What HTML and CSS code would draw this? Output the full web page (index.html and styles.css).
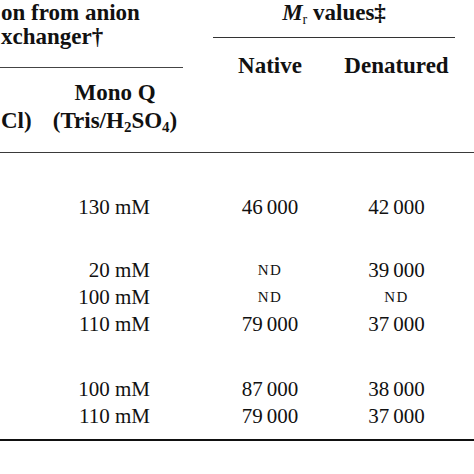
FILE: index.html
```html
<!DOCTYPE html>
<html>
<head>
<meta charset="utf-8">
<link rel="stylesheet" href="styles.css">
</head>
<body>
<div class="table">
  <div class="head">
    <div class="head-left">
      <div class="grp-title">
        <div class="t1">on from anion</div>
        <div class="t2">xchanger†</div>
      </div>
      <div class="sub">
        <div class="sub-cut">Cl)</div>
        <div class="sub-mono">
          <div>Mono Q</div>
          <div>(Tris/H<sub>2</sub>SO<sub>4</sub>)</div>
        </div>
      </div>
    </div>
    <div class="head-right">
      <div class="mr"><i>M</i><sub class="r">r</sub> values‡</div>
      <div class="cols">
        <div class="c-nat">Native</div>
        <div class="c-den">Denatured</div>
      </div>
    </div>
  </div>
  <div class="rows">
    <div class="group">
      <div class="row"><span class="mono">130 mM</span><span></span><span>46&#8201;000</span><span>42&#8201;000</span></div>
    </div>
    <div class="group g2">
      <div class="row"><span class="mono">20 mM</span><span></span><span class="nd">ND</span><span>39&#8201;000</span></div>
      <div class="row"><span class="mono">100 mM</span><span></span><span class="nd">ND</span><span class="nd">ND</span></div>
      <div class="row"><span class="mono">110 mM</span><span></span><span>79&#8201;000</span><span>37&#8201;000</span></div>
    </div>
    <div class="group g3">
      <div class="row"><span class="mono">100 mM</span><span></span><span>87&#8201;000</span><span>38&#8201;000</span></div>
      <div class="row"><span class="mono">110 mM</span><span></span><span>79&#8201;000</span><span>37&#8201;000</span></div>
    </div>
  </div>
</div>
</body>
</html>
```
FILE: styles.css
```css
html, body {
  margin: 0;
  padding: 0;
  background: #fff;
}
body {
  width: 474px;
  height: 474px;
  overflow: hidden;
  font-family: "Liberation Serif", "Times New Roman", serif;
  color: #111;
}
.table {
  width: 474px;
}
.head {
  display: flex;
  border-bottom: 1px solid #3a3a3a;
  font-weight: bold;
  font-size: 23px;
  line-height: 27px;
}
.head sub {
  font-size: 15px;
  line-height: 0;
  vertical-align: -4px;
}
.head-left {
  width: 213px;
  flex-shrink: 0;
}
.grp-title {
  width: 183px;
  border-bottom: 1px solid #444;
  padding-bottom: 19px;
  white-space: nowrap;
}
.t1 {
  padding-left: 1px;
  line-height: 26px;
}
.t2 {
  padding-left: 1px;
  line-height: 22px;
}
.sub {
  display: flex;
  margin-top: 11px;
  line-height: 28px;
  padding-bottom: 17px;
  white-space: nowrap;
}
.sub-cut {
  width: 40px;
  padding-left: 1px;
  box-sizing: border-box;
  align-self: flex-end;
  flex-shrink: 0;
}
.sub-mono {
  width: 150px;
  text-align: center;
  flex-shrink: 0;
}
.head-right {
  width: 242px;
  flex-shrink: 0;
}
.mr {
  text-align: center;
  line-height: 26px;
  border-bottom: 1px solid #333;
  padding-bottom: 11px;
}
.mr sub.r {
  font-weight: normal;
  font-size: 14px;
}
.cols {
  display: flex;
  margin-top: 14px;
}
.c-nat {
  width: 114px;
  flex-shrink: 0;
  text-align: center;
}
.c-den {
  width: 139px;
  flex-shrink: 0;
  text-align: center;
}
.rows {
  font-size: 21px;
  line-height: 27px;
  padding-top: 41px;
  padding-bottom: 9px;
  border-bottom: 2px solid #111;
}
.g2 {
  margin-top: 36px;
}
.g3 {
  margin-top: 38px;
}
.row {
  display: grid;
  grid-template-columns: 150px 63px 114px 139px;
  white-space: nowrap;
}
.row span {
  text-align: center;
}
.row span.mono {
  text-align: right;
}
.nd {
  font-size: 15px;
  letter-spacing: 1.5px;
}
```
